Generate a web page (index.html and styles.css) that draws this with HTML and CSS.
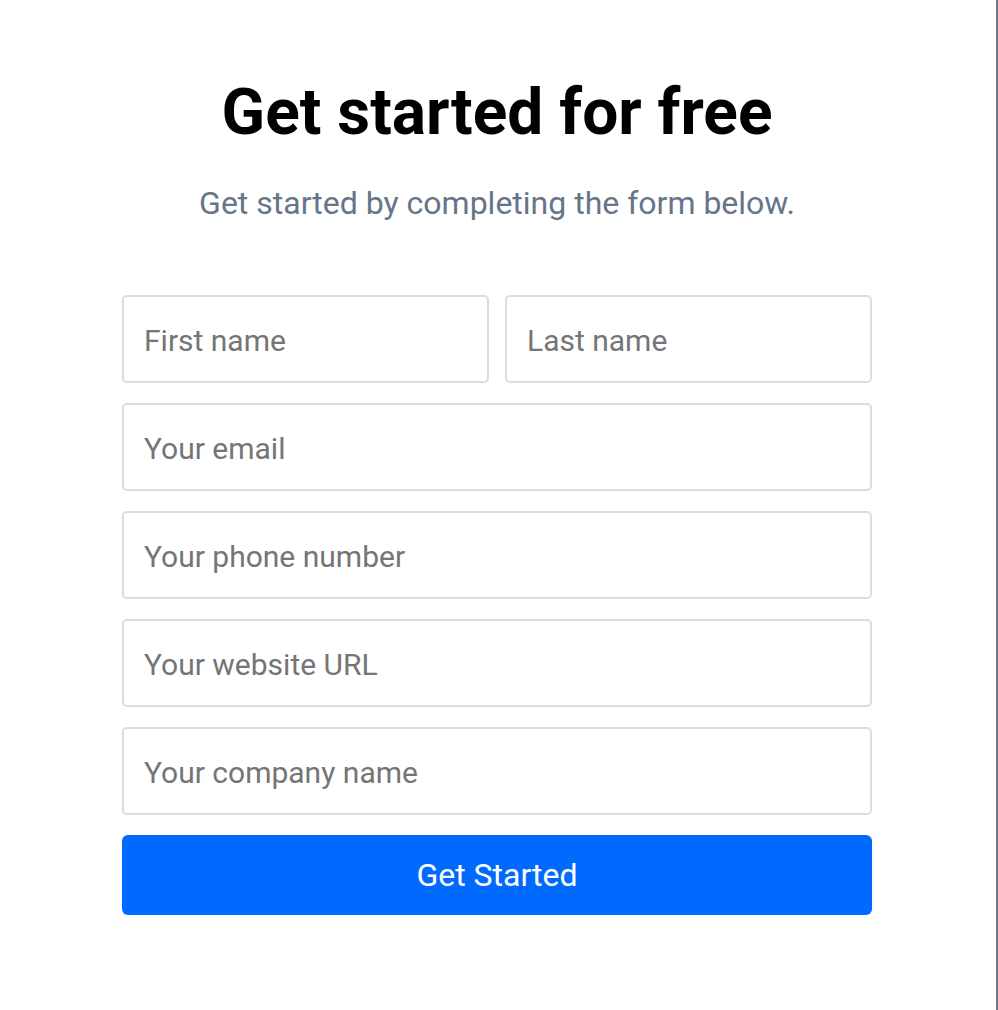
FILE: index.html
```html
<!DOCTYPE html>
<html lang="en">
<head>
    <meta charset="UTF-8">
    <meta name="viewport" content="width=device-width, initial-scale=1.0">
    <title>Get started for free</title>
    <link rel="stylesheet" href="styles.css">
</head>
<body>
    <div class="page">
        <h1>Get started for free</h1>
        <p class="subtitle">Get started by completing the form below.</p>

        <form class="signup-form">
            <div class="name-row">
                <input type="text" placeholder="First name">
                <input type="text" placeholder="Last name">
            </div>
            <input type="email" placeholder="Your email">
            <input type="tel" placeholder="Your phone number">
            <input type="url" placeholder="Your website URL">
            <input type="text" placeholder="Your company name">
            <button type="submit">Get Started</button>
        </form>
    </div>
</body>
</html>
```

FILE: styles.css
```css
* {
    box-sizing: border-box;
}

body {
    margin: 0;
    font-family: Roboto, 'Liberation Sans', sans-serif;
    background: #fff;
}

.page {
    width: 998px;
    min-height: 100vh;
    border-right: 2px solid #6b778c;
    padding: 75px 2px 0 0;
}

h1 {
    margin: 0;
    font-size: 64px;
    line-height: 76px;
    font-weight: 700;
    text-align: center;
    color: #000;
}

.subtitle {
    margin: 33px 0 0;
    font-size: 32px;
    line-height: 38px;
    text-align: center;
    color: #667589;
}

.signup-form {
    width: 750px;
    margin: 73px auto 0;
    display: flex;
    flex-direction: column;
    gap: 20px;
}

.name-row {
    display: grid;
    grid-template-columns: 1fr 1fr;
    gap: 16px;
}

input {
    width: 100%;
    height: 88px;
    padding: 3px 20px 0;
    border: 2px solid #dcdcdc;
    border-radius: 5px;
    font-family: inherit;
    font-size: 30px;
    color: #333;
    outline: none;
}

input::placeholder {
    color: #757575;
}

button {
    height: 80px;
    border: none;
    border-radius: 6px;
    background: #006aff;
    color: #fff;
    font-family: inherit;
    font-size: 32px;
    cursor: pointer;
}
```
